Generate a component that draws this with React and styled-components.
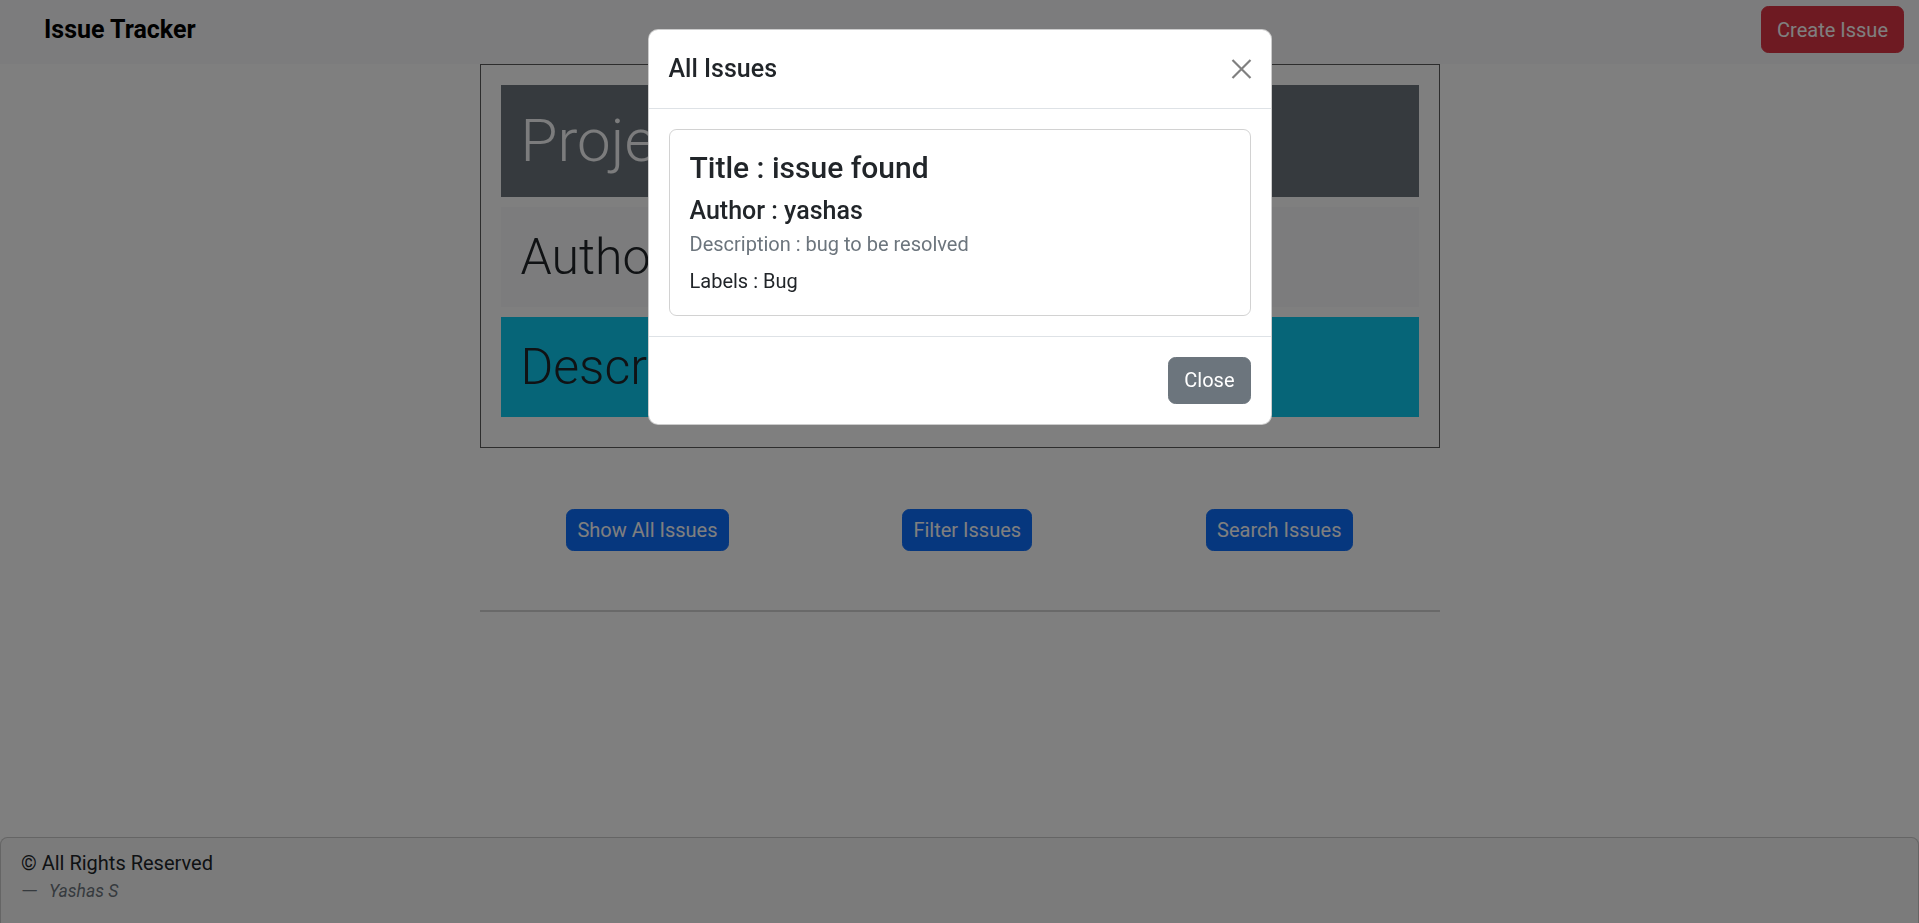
import React from 'react'
import styled, { createGlobalStyle } from 'styled-components'

const GlobalStyle = createGlobalStyle`
html, body {
  margin: 0;
  padding: 0;
}
body {
  font-family: "Segoe UI", Roboto, "Liberation Sans", sans-serif;
  font-size: 20px;
  line-height: 1.5;
  color: #212529;
  background: #fff;
}
*, *::before, *::after { box-sizing: border-box; }
`

const Page = styled.div`
min-height: 100vh;
display: flex;
flex-direction: column;
`

//================ navbar

const Navbar = styled.nav`
height: 64px;
display: flex;
justify-content: space-between;
align-items: flex-start;
padding: 6px 15px 0 44px;
background-color: #f8f9fa;
`

const Brand = styled.a`
font-size: 25px;
font-weight: 700;
line-height: 47px;
color: #000;
text-decoration: none;
`

const Button = styled.button`
font-family: inherit;
font-size: 20px;
line-height: 30px;
padding: ${p => p.$compact ? '5px 10px' : '7.5px 15px'};
border: 1px solid ${p => p.$bg};
border-radius: 7.5px;
background-color: ${p => p.$bg};
color: #fff;
cursor: pointer;
`

//================ main

const Main = styled.main`
width: 960px;
margin: 0 auto;
`

const Box = styled.section`
border: 1px solid #5a5a5a;
padding: 20px 20px 20px;
`

const Banner = styled.h1`
margin: 0 0 10px;
padding: 20px 20px;
font-size: ${p => p.$size}px;
font-weight: 300;
line-height: 1.2;
background-color: ${p => p.$bg};
color: ${p => p.$fg};
`

const ButtonRow = styled.div`
display: flex;
justify-content: space-around;
margin: 61px 0 59px;
`

const Rule = styled.hr`
margin: 0;
border: 0;
border-top: 2px solid #d2d2d2;
`

//================ footer

const Footer = styled.footer`
margin-top: auto;
min-height: 86px;
padding: 10px 20px;
border: 1px solid rgba(0, 0, 0, .175);
border-bottom: 0;
border-radius: 7.5px 7.5px 0 0;
background-color: #f7f7f7;
`

const Quote = styled.blockquote`
margin: 0;
p {
  margin: 0;
  font-size: 20px;
  line-height: 30px;
}
`

const Cite = styled.div`
font-size: 17.5px;
line-height: 26px;
color: #6c757d;
&::before {
  content: "\\2014";
  display: inline-block;
  width: 28px;
  transform: scaleX(1.25);
  transform-origin: left center;
}
cite { font-style: italic; }
`

//================ modal

const Backdrop = styled.div`
position: fixed;
inset: 0;
background-color: rgba(0, 0, 0, .5);
display: flex;
flex-direction: column;
align-items: center;
padding-top: 29px;
`

const Dialog = styled.div`
width: 624px;
background-color: #fff;
border: 1px solid rgba(0, 0, 0, .2);
border-radius: 10px;
`

const DialogHeader = styled.div`
display: flex;
align-items: center;
justify-content: space-between;
padding: 20px 19px 20px 20px;
border-bottom: 1px solid #dee2e6;
`

const DialogTitle = styled.h5`
margin: 0;
font-size: 25px;
font-weight: 500;
line-height: 37.5px;
`

const CloseX = styled.button`
display: flex;
padding: 0;
border: 0;
background: none;
cursor: pointer;
`

const DialogBody = styled.div`
padding: 20px;
`

const DialogFooter = styled.div`
display: flex;
justify-content: flex-end;
padding: 15px;
border-top: 1px solid #dee2e6;
& > * { margin: 5px; }
`

const IssueCard = styled.div`
border: 1px solid rgba(0, 0, 0, .175);
border-radius: 7.5px;
padding: 20px 20px 19px;
`

const CardHeading = styled.div`
margin: 0 0 ${p => p.$gap}px;
font-size: ${p => p.$size}px;
font-weight: ${p => p.$weight || 400};
line-height: ${p => p.$lh}px;
color: ${p => p.$muted ? '#6c757d' : '#212529'};
`

const issue = {
  title: 'issue found',
  author: 'yashas',
  description: 'bug to be resolved',
  labels: ['Bug'],
}

export default function App() {
  return (
    <>
      <GlobalStyle />
      <Page>
        <Navbar>
          <Brand href="#">Issue Tracker</Brand>
          <Button $bg="#dc3545">Create Issue</Button>
        </Navbar>

        <Main>
          <Box>
            <Banner $size={60} $bg="#6c757d" $fg="#f8f9fa">Project</Banner>
            <Banner $size={50} $bg="#f8f9fa" $fg="#212529">Author</Banner>
            <Banner $size={50} $bg="#0dcaf0" $fg="#212529">Description</Banner>
          </Box>

          <ButtonRow>
            <Button $compact $bg="#0d6efd">Show All Issues</Button>
            <Button $compact $bg="#0d6efd">Filter Issues</Button>
            <Button $compact $bg="#0d6efd">Search Issues</Button>
          </ButtonRow>

          <Rule />
        </Main>

        <Footer>
          <Quote>
            <p>© All Rights Reserved</p>
            <Cite><cite>Yashas S</cite></Cite>
          </Quote>
        </Footer>
      </Page>

      <Backdrop>
        <Dialog>
          <DialogHeader>
            <DialogTitle>All Issues</DialogTitle>
            <CloseX aria-label="Close">
              <svg width="21" height="20" viewBox="0 0 21 20">
                <path d="M1.5 1 L19.5 19 M19.5 1 L1.5 19" stroke="#808080" strokeWidth="2.2" fill="none" />
              </svg>
            </CloseX>
          </DialogHeader>
          <DialogBody>
            <IssueCard>
              <CardHeading $size={30} $lh={36} $gap={10} $weight={500}>Title : {issue.title}</CardHeading>
              <CardHeading $size={25} $lh={30} $gap={3} $weight={500}>Author : {issue.author}</CardHeading>
              <CardHeading $size={20} $lh={30} $gap={7} $muted>Description : {issue.description}</CardHeading>
              <CardHeading $size={20} $lh={30} $gap={0}>Labels : {issue.labels.join(', ')}</CardHeading>
            </IssueCard>
          </DialogBody>
          <DialogFooter>
            <Button $bg="#6c757d">Close</Button>
          </DialogFooter>
        </Dialog>
      </Backdrop>
    </>
  )
}
